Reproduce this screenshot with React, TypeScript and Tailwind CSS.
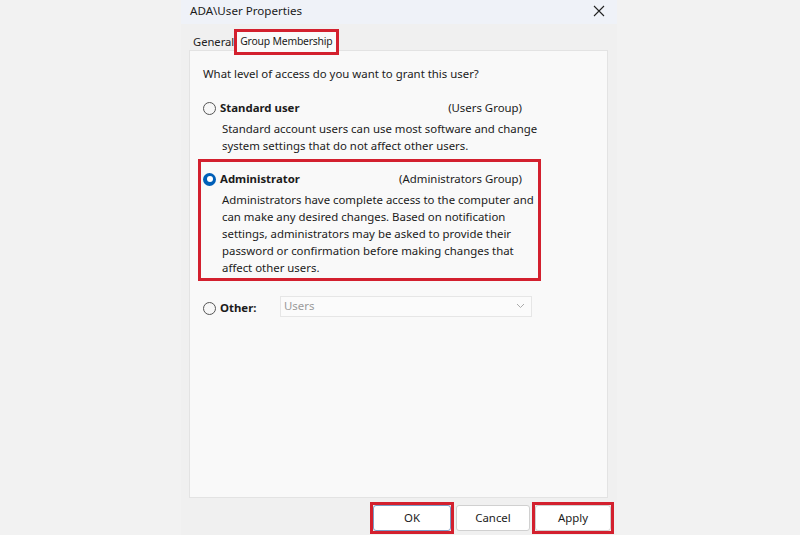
import React from 'react';

const font = { fontFamily: '"Noto Sans", "Open Sans", sans-serif' };

const Radio = ({ checked }: { checked?: boolean }) =>
  checked ? (
    <span className="w-[13px] h-[13px] rounded-full bg-[#005fb8] flex items-center justify-center shrink-0">
      <span className="w-[6px] h-[6px] rounded-full bg-white" />
    </span>
  ) : (
    <span className="w-[13px] h-[13px] rounded-full border border-[#555] bg-[#f7f7f7] shrink-0" />
  );

export default function App() {
  return (
    <div className="w-[800px] h-[535px] bg-[#f2f2f2] overflow-hidden text-[#1b1b1b]" style={font}>
      <div className="ml-[181px] w-[436px] h-[535px] flex flex-col bg-[#f0f0f0]">
        {/* title bar */}
        <div className="h-[24px] shrink-0 bg-[#eff2f8] flex items-center justify-between pl-[9px] pr-[12px]">
          <span className="text-[11.6px] mt-[-2px]">ADA\User Properties</span>
          <svg width="12" height="12" viewBox="0 0 12 12" className="mt-[-2px]">
            <path d="M1 1 L11 11 M11 1 L1 11" stroke="#222" strokeWidth="1.1" />
          </svg>
        </div>

        {/* tabs */}
        <div className="h-[31px] shrink-0 flex items-start pl-[12px]">
          <span className="text-[11.2px] mt-[10px] text-[#222]">General</span>
          <span className="relative z-10 mt-[5px] border-[3px] border-[#d3202e] px-[3px] h-[26px] flex items-center text-[10.4px] tracking-[-0.2px] bg-[#fafafa]">
            Group Membership
          </span>
        </div>

        {/* panel */}
        <div className="mt-[-5px] ml-[8px] w-[419px] h-[448px] shrink-0 bg-[#f9f9f9] border border-[#e3e3e3] pl-[13px] pt-[9px] flex flex-col text-[11.4px]">
          <div className="leading-[28px]">What level of access do you want to grant this user?</div>

          <div className="mt-[11px] w-[319px]">
            <div className="flex items-center h-[18px]">
              <Radio />
              <span className="ml-[4px] font-bold">Standard user</span>
              <span className="ml-auto">(Users Group)</span>
            </div>
            <div className="pl-[19px] mt-[4px] leading-[16.5px] w-[342px]">
              Standard account users can use most software and change system settings that do not affect other users.
            </div>
          </div>

          <div className="mt-[5px] ml-[-5px] w-[343px] border-[3px] border-[#d3202e] pl-[2px] pt-[8px] pb-[2px]">
            <div className="w-[319px]">
              <div className="flex items-center h-[18px]">
                <Radio checked />
                <span className="ml-[4px] font-bold">Administrator</span>
                <span className="ml-auto">(Administrators Group)</span>
              </div>
              <div className="pl-[19px] mt-[3px] leading-[17px] w-[342px]">
                Administrators have complete access to the computer and can make any desired changes. Based on notification settings, administrators may be asked to provide their password or confirmation before making changes that affect other users.
              </div>
            </div>
          </div>

          <div className="mt-[16px] flex items-center h-[22px]">
            <Radio />
            <span className="ml-[4px] font-bold w-[60px]">Other:</span>
            <div className="w-[252px] h-[21px] border border-[#e6e6e6] bg-[#fbfbfb] flex items-center justify-between pl-[3px] pr-[6px] mt-[-4px]">
              <span className="text-[#9a9a9a]">Users</span>
              <svg width="9" height="6" viewBox="0 0 9 6">
                <path d="M1 1 L4.5 4.5 L8 1" stroke="#aaa" strokeWidth="1" fill="none" />
              </svg>
            </div>
          </div>
        </div>

        {/* buttons */}
        <div className="flex items-center mt-[4px] ml-[189px] gap-[2px] text-[11.4px]">
          <div className="border-[3px] border-[#d3202e]">
            <button className="w-[78px] h-[26px] bg-white border border-[#7a9cc6] rounded-[3px]">OK</button>
          </div>
          <button className="w-[74px] h-[26px] bg-white border border-[#d0d0d0] rounded-[3px]">Cancel</button>
          <div className="border-[3px] border-[#d3202e]">
            <button className="w-[76px] h-[26px] bg-white border border-[#d0d0d0] rounded-[3px]">Apply</button>
          </div>
        </div>
      </div>
    </div>
  );
}
